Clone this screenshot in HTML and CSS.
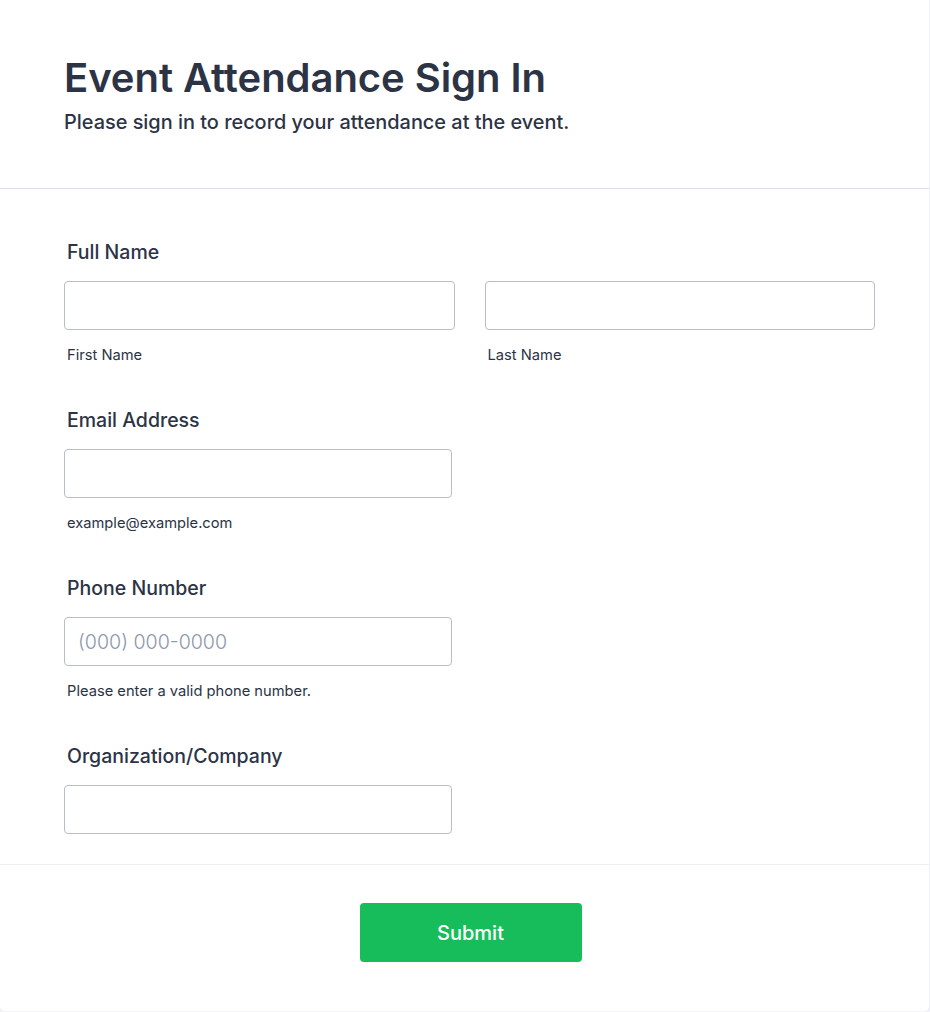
FILE: index.html
```html
<!DOCTYPE html>
<html lang="en">
<head>
    <meta charset="UTF-8">
    <meta name="viewport" content="width=device-width, initial-scale=1.0">
    <title>Event Attendance Sign In</title>
    <link rel="stylesheet" href="styles.css">
</head>
<body>
    <div class="form-card">
        <header class="form-header">
            <h1>Event Attendance Sign In</h1>
            <p>Please sign in to record your attendance at the event.</p>
        </header>

        <form class="form-body" onsubmit="return false;">
            <div class="field">
                <label class="field-label">Full Name</label>
                <div class="field-row">
                    <div class="field-col">
                        <input type="text" class="input">
                        <span class="sublabel">First Name</span>
                    </div>
                    <div class="field-col">
                        <input type="text" class="input">
                        <span class="sublabel">Last Name</span>
                    </div>
                </div>
            </div>

            <div class="field">
                <label class="field-label">Email Address</label>
                <div class="field-col single">
                    <input type="email" class="input">
                    <span class="sublabel">example@example.com</span>
                </div>
            </div>

            <div class="field">
                <label class="field-label">Phone Number</label>
                <div class="field-col single">
                    <input type="tel" class="input" placeholder="(000) 000-0000">
                    <span class="sublabel">Please enter a valid phone number.</span>
                </div>
            </div>

            <div class="field">
                <label class="field-label">Organization/Company</label>
                <div class="field-col single">
                    <input type="text" class="input">
                </div>
            </div>
        </form>

        <footer class="form-footer">
            <button class="btn-submit" type="button">Submit</button>
        </footer>
    </div>
</body>
</html>
```

FILE: styles.css
```css
:root {
    --text: #2c3345;
    --input-border: #b8bdc9;
    --placeholder: #8d97ab;
    --green: #18bd5b;
    --divider: #dcdcea;
    --divider-light: #eeeef3;
    --radius: 4px;
}

* {
    box-sizing: border-box;
    margin: 0;
    padding: 0;
}

body {
    font-family: Inter, 'Noto Sans', sans-serif;
    background-color: #f3f3fe;
    color: var(--text);
}

.form-card {
    width: 929px;
    min-height: 1011px;
    background-color: #fff;
    border-radius: 0 0 4px 4px;
    box-shadow: 0 0 1px rgba(80, 80, 120, 0.25);
}

.form-header {
    padding: 54px 64px 52px;
    border-bottom: 1px solid var(--divider);
}

.form-header h1 {
    font-size: 40px;
    line-height: 48px;
    font-weight: 600;
    letter-spacing: -0.05px;
}

.form-header p {
    margin-top: 7px;
    font-size: 19.9px;
    line-height: 27px;
    font-weight: 500;
}

.form-body {
    padding: 50px 54px 30px 64px;
    display: flex;
    flex-direction: column;
    gap: 41px;
    border-bottom: 1px solid var(--divider-light);
}

.field-label {
    display: block;
    padding-left: 3px;
    font-size: 19.5px;
    line-height: 27px;
    font-weight: 500;
    margin-bottom: 15px;
}

.field-row {
    display: flex;
    gap: 30px;
}

.field-col {
    display: flex;
    flex-direction: column;
    width: 391px;
}

.field-col.single {
    width: 388px;
}

.input {
    height: 49px;
    width: 100%;
    border: 1px solid var(--input-border);
    border-radius: var(--radius);
    padding: 0 13px;
    font-family: inherit;
    font-size: 19.6px;
    font-weight: 300;
    color: var(--text);
    background-color: #fff;
}

.input::placeholder {
    color: var(--placeholder);
    font-weight: 300;
}

.sublabel {
    margin-top: 15px;
    padding-left: 3px;
    font-size: 14.7px;
    line-height: 21px;
}

.form-footer {
    padding: 38px 0 49px;
    display: flex;
    justify-content: center;
}

.btn-submit {
    width: 222px;
    height: 59px;
    margin-left: 12px;
    border: none;
    border-radius: var(--radius);
    background-color: var(--green);
    color: #fff;
    font-family: inherit;
    font-size: 20px;
    font-weight: 500;
    cursor: pointer;
}
```
